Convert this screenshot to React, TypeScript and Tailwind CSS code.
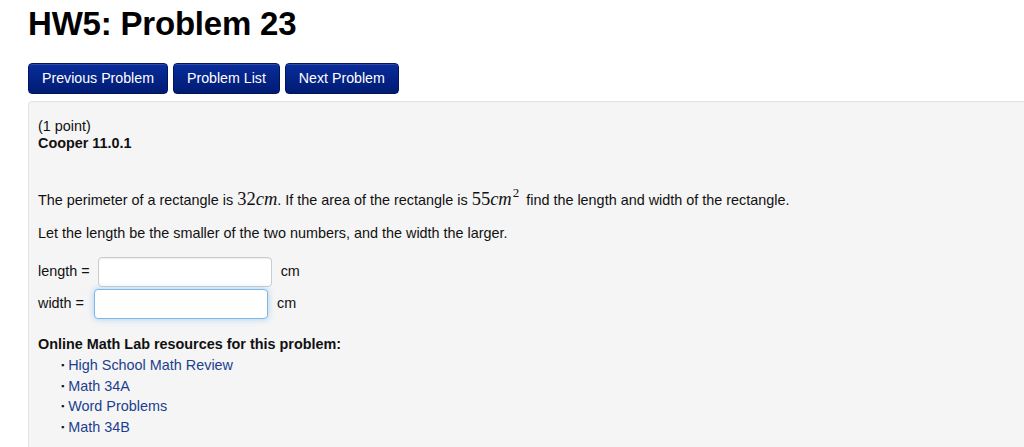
const resources = ['High School Math Review', 'Math 34A', 'Word Problems', 'Math 34B'];

function NavButton({ label }: { label: string }) {
  return (
    <button className="h-[31px] px-[13px] rounded-[4px] border border-[#00155e] bg-gradient-to-b from-[#0b2d9c] to-[#001b72] text-white text-[14.2px] leading-none shadow-[inset_0_1px_0_rgba(255,255,255,0.15)]">
      {label}
    </button>
  );
}

function Math({ num, sup }: { num: string; sup?: boolean }) {
  return (
    <span className="font-['Liberation_Serif',serif] text-[18.5px]">
      {num}
      <i>cm</i>
      {sup && <span className="ml-[1px] mr-[3px] text-[13px] relative top-[-8px]">2</span>}
    </span>
  );
}

export default function App() {
  return (
    <div className="h-[447px] overflow-hidden bg-white font-['Liberation_Sans',Arial,sans-serif] text-[14.4px] text-[#111]">
      <div className="pl-[28px]">
        <h1 className="pt-[5px] text-[33px] font-bold leading-[38px] text-black tracking-[-0.2px]">HW5: Problem 23</h1>

        <div className="mt-[20px] flex gap-[5px]">
          <NavButton label="Previous Problem" />
          <NavButton label="Problem List" />
          <NavButton label="Next Problem" />
        </div>

        {/* Problem body */}
        <div className="mt-[7px] mr-[-10px] h-[400px] rounded-[4px] border border-[#e3e3e3] bg-[#f5f5f5] pl-[9px] pt-[15px]">
          <p className="leading-[18px]">(1 point)</p>
          <p className="leading-[17px] font-bold">Cooper 11.0.1</p>

          <p className="mt-[36px] leading-[22px]">
            The perimeter of a rectangle is <Math num="32" />. If the area of the rectangle is <Math num="55" sup /> find the
            length and width of the rectangle.
          </p>

          <p className="mt-[12px] leading-[18px]">Let the length be the smaller of the two numbers, and the width the larger.</p>

          <div className="mt-[15px] flex items-center h-[30px]">
            <span>length =</span>
            <input className="ml-[8px] h-[30px] w-[174px] rounded-[4px] border border-[#cccccc] bg-white shadow-[inset_0_1px_1px_rgba(0,0,0,0.075)]" />
            <span className="ml-[9px]">cm</span>
          </div>
          <div className="mt-[2px] flex items-center h-[30px]">
            <span>width =</span>
            <input className="ml-[10px] h-[30px] w-[174px] rounded-[4px] border border-[#7bb8ec] bg-white shadow-[0_0_6px_rgba(82,168,236,0.5)] outline-none" />
            <span className="ml-[9px]">cm</span>
          </div>

          <p className="mt-[16px] font-bold leading-[18px]">Online Math Lab resources for this problem:</p>
          <ul className="mt-[2px] pl-[23px]">
            {resources.map((r) => (
              <li key={r} className="flex items-center leading-[20.7px]">
                <span className="mr-[4px] text-[#111] text-[9px]">▪</span>
                <a href="#" className="text-[#1b3f8e]">
                  {r}
                </a>
              </li>
            ))}
          </ul>
        </div>
      </div>
    </div>
  );
}
